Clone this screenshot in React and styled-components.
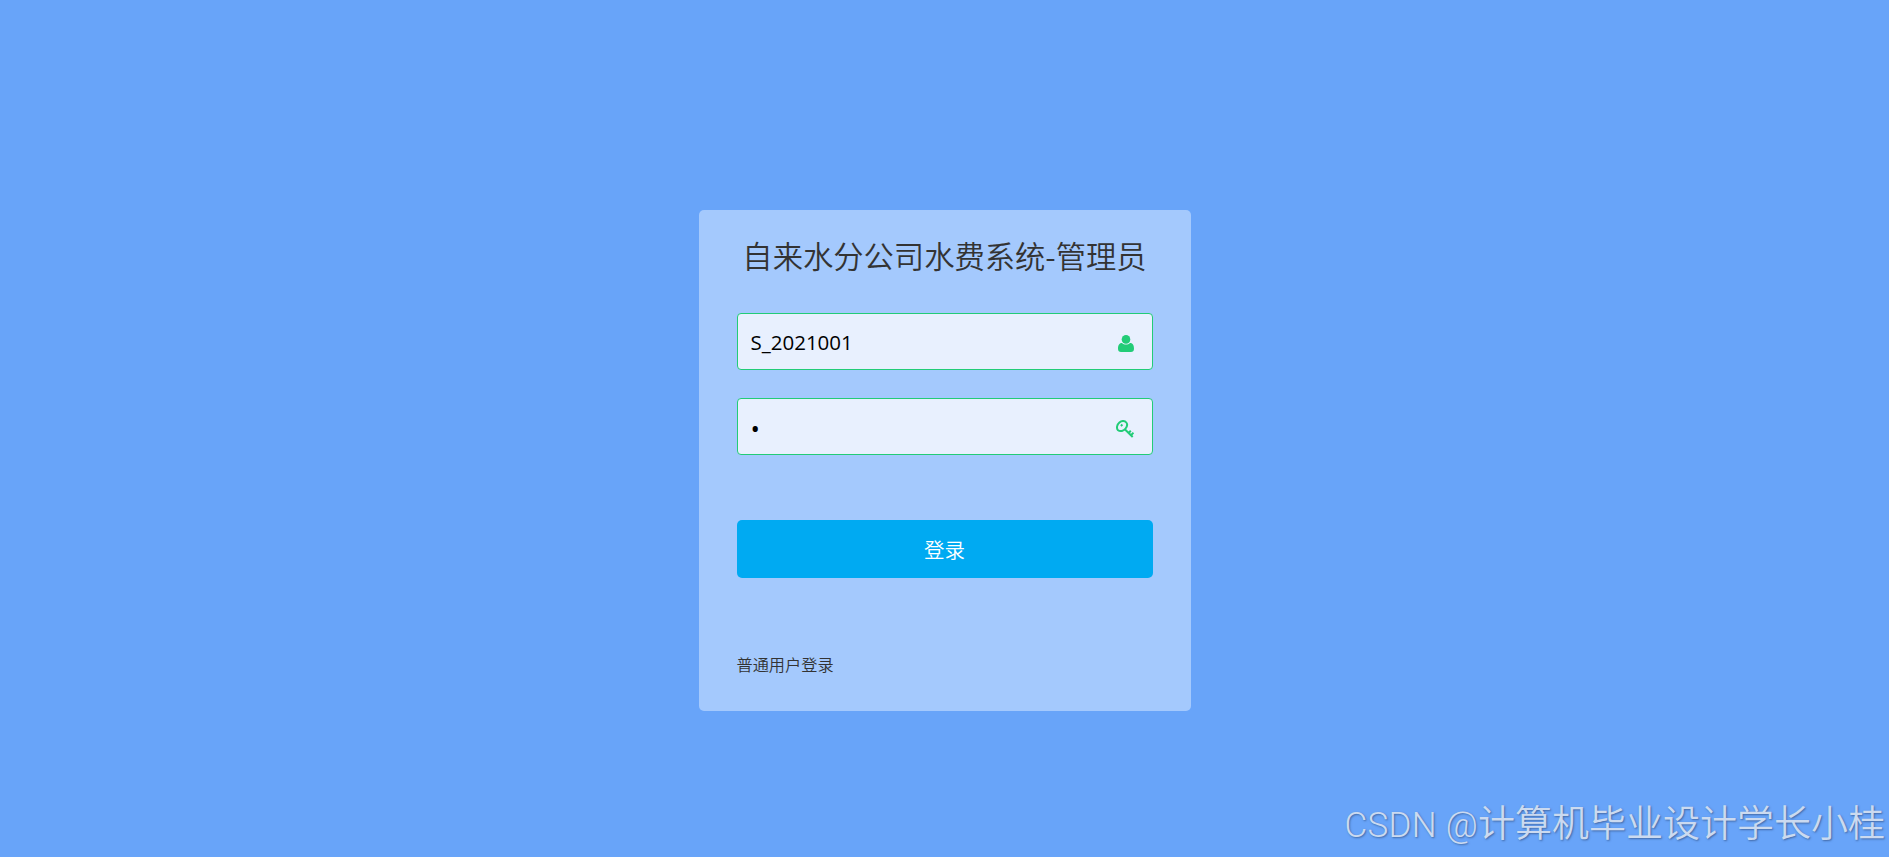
import React from "react";
import styled, { createGlobalStyle } from "styled-components";

function App() {
  return (
    <>
      <GlobalStyle />
      <Page>
        <LoginCard>
          <Title>自来水分公司水费系统-管理员</Title>
          <Field>
            <Input type="text" defaultValue="S_2021001" />
            <UserIcon />
          </Field>
          <Field>
            <Input type="password" defaultValue="1" />
            <KeyIcon />
          </Field>
          <LoginButton type="button">登录</LoginButton>
          <UserLink href="#">普通用户登录</UserLink>
        </LoginCard>
        <Watermark>
          <Latin>CSDN @</Latin>计算机毕业设计学长小桂
        </Watermark>
      </Page>
    </>
  );
}

function UserIcon() {
  return (
    <Icon width="16" height="17" viewBox="0 0 16 17">
      <ellipse cx="8" cy="4.4" rx="4.3" ry="4.4" />
      <path d="M4 8C1 8 0 10.700 0 13.700C0 15.800 1.200 17 3 17H13C14.800 17 16 15.800 16 13.700C16 10.700 15 8 12 8C10.900 9 9.500 9.500 8 9.500C6.500 9.500 5.100 9 4 8Z" />
    </Icon>
  );
}

function KeyIcon() {
  return (
    <Icon width="18" height="18" viewBox="0 0 18 18">
      <path
        d="M9.600 8.500C7.800 10.900 4.200 12 2.100 10.200C.1 8.300 1 4.400 3.400 2.400C5.700.500 8.700.500 10.300 2.500C11.600 4.200 11.200 6.500 9.600 8.500ZM8.800 9.200L16.700 17M12.800 12.800L14.800 10.800M15.200 15L17.500 12.700M4.900 5.900L6.400 4.500"
        fill="none"
        stroke="#22cc77"
        strokeWidth="2"
      />
    </Icon>
  );
}

export default App;

const GlobalStyle = createGlobalStyle`
  * {
    box-sizing: border-box;
  }

  body {
    margin: 0;
    overflow: hidden;
    font-family: "Open Sans", "Noto Sans CJK SC", sans-serif;
  }
`;

const Page = styled.div`
  position: relative;
  height: 100vh;
  padding-top: 210px;
  background: #68a4f9;
`;

const LoginCard = styled.div`
  display: flex;
  flex-direction: column;
  width: 492px;
  height: 501px;
  margin: 0 auto;
  padding: 23px 38px 0;
  border-radius: 5px;
  background: #a4c9fd;
`;

const Title = styled.h1`
  margin: 0 0 35px;
  color: #333;
  font-family: "Noto Sans CJK SC DemiLight", "Noto Sans CJK SC", sans-serif;
  font-size: 30.3px;
  font-weight: 350;
  line-height: 45px;
  text-align: center;
  white-space: nowrap;
`;

const Field = styled.div`
  display: flex;
  align-items: center;
  height: 57px;
  margin-bottom: 28px;
  padding: 0 18px 0 13px;
  border: 1px solid #22cc77;
  border-radius: 4px;
  background: #e8f0fe;
`;

const Input = styled.input`
  flex: 1;
  min-width: 0;
  padding: ${(props) => (props.type === "password" ? "2px 0 0" : "0")};
  border: 0;
  outline: 0;
  background: transparent;
  color: #000;
  font-family: "Open Sans", sans-serif;
  font-size: ${(props) => (props.type === "password" ? "25px" : "20.5px")};
`;

const Icon = styled.svg`
  flex-shrink: 0;
  margin-top: 4px;
  fill: #22cc77;
`;

const LoginButton = styled.button`
  height: 58px;
  margin-top: 37px;
  padding: 0;
  border: 0;
  border-radius: 5px;
  background: #00aaf2;
  color: #fff;
  font-family: "Noto Sans CJK SC", sans-serif;
  font-size: 20.5px;
  font-weight: 350;
`;

const UserLink = styled.a`
  align-self: flex-start;
  margin-top: 74px;
  color: #333;
  font-family: "Noto Sans CJK SC DemiLight", "Noto Sans CJK SC", sans-serif;
  font-size: 16.2px;
  font-weight: 350;
  line-height: 24px;
  text-decoration: none;
`;

const Watermark = styled.div`
  position: absolute;
  right: 4px;
  bottom: 4px;
  color: #cbdaf0;
  font-family: "Noto Sans CJK SC", sans-serif;
  font-size: 37px;
  font-weight: 350;
  line-height: 54px;
  text-shadow: 1px 1px 2px rgba(50, 80, 130, 0.7);
  white-space: nowrap;
`;

const Latin = styled.span`
  font-family: Roboto, "Liberation Sans", sans-serif;
  font-size: 35px;
  font-weight: 350;
  letter-spacing: 0.3px;
`;
